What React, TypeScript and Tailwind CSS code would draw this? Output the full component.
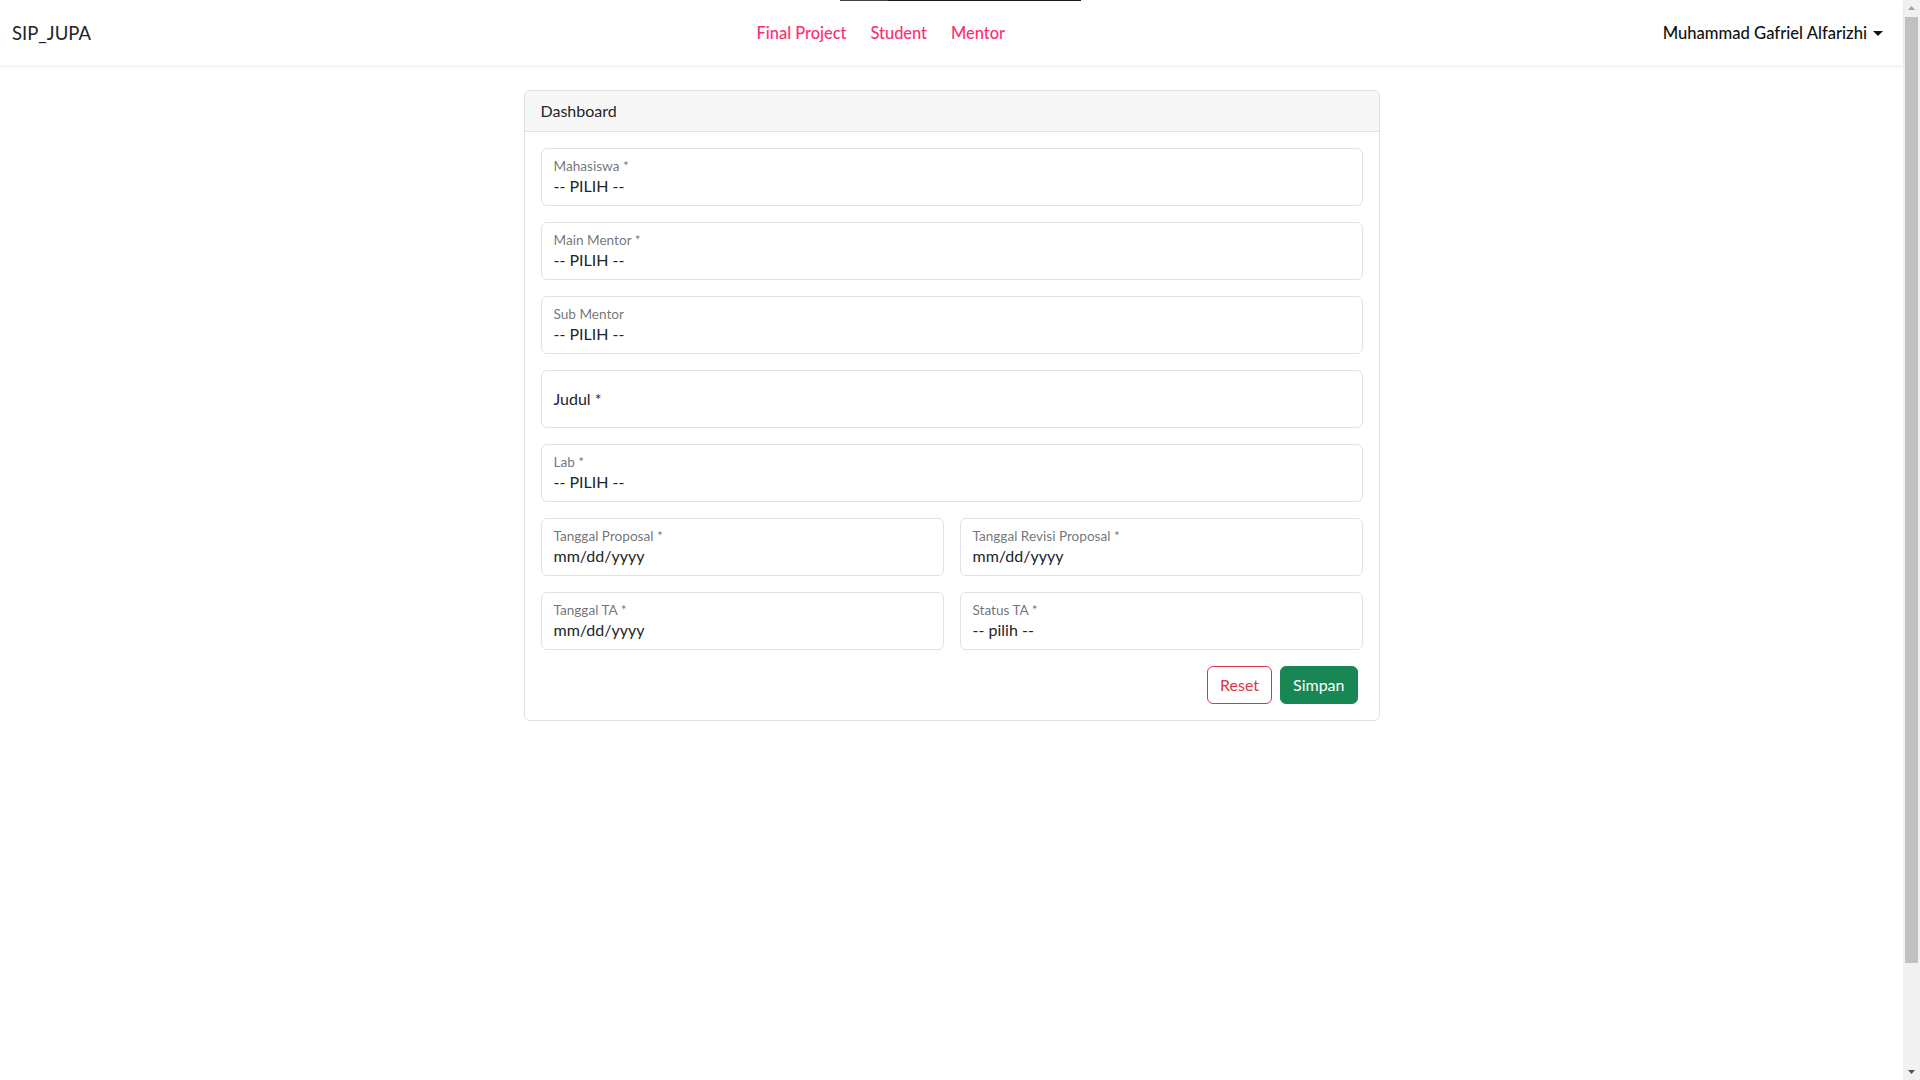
import React from "react"

const font = { fontFamily: "Lato, 'Liberation Sans', sans-serif" }

interface FieldProps {
  label: string
  value: string
}

function FloatingField({ label, value }: FieldProps) {
  return (
    <div className="flex h-[58px] flex-col rounded-md border border-[#dee2e6] bg-white px-3 pt-[9px]">
      <span className="text-[13.6px] leading-[16px] text-[#212529a6]">{label}</span>
      <span className="text-base leading-6 text-[#212529]">{value}</span>
    </div>
  )
}

function PlaceholderField({ label }: { label: string }) {
  return (
    <div className="flex h-[58px] items-center rounded-md border border-[#dee2e6] bg-white px-3">
      <span className="text-base text-[#212529]">{label}</span>
    </div>
  )
}

export default function App() {
  return (
    <div className="flex h-screen overflow-hidden bg-white text-[#212529]" style={font}>
      <div className="relative min-w-0 flex-1">
        {/* loading bar at the top */}
        <div className="absolute left-[840px] top-0 z-10 flex h-px w-[241px]">
          <div className="w-[48px] bg-[#444]" />
          <div className="flex-1 bg-[#1a1a1a]" />
        </div>

        <nav className="flex h-[65px] items-center bg-white px-3 pt-[2px] shadow-[0_2px_4px_rgba(0,0,0,0.06)]">
          <span className="mr-4 text-[18.5px] text-[#212529]">SIP_JUPA</span>
          <ul className="mx-auto flex items-center gap-6 text-[16.4px] font-medium text-[#ff2e72]">
            <li>Final Project</li>
            <li>Student</li>
            <li>Mentor</li>
          </ul>
          <div className="flex items-center px-2 text-[16.6px] font-medium text-[#111]">
            Muhammad Gafriel Alfarizhi
            <span className="ml-[6px] h-0 w-0 border-x-[5px] border-t-[5px] border-x-transparent border-t-[#111]" />
          </div>
        </nav>

        <div className="mx-auto mt-[25px] w-[856px]">
          <div className="rounded-md border border-[#dee2e6]">
            <div className="rounded-t-md border-b border-[#dee2e6] bg-[#f7f7f7] px-4 py-2 leading-6">
              Dashboard
            </div>
            <div className="flex flex-col gap-4 p-4">
              <FloatingField label="Mahasiswa *" value="-- PILIH --" />
              <FloatingField label="Main Mentor *" value="-- PILIH --" />
              <FloatingField label="Sub Mentor" value="-- PILIH --" />
              <PlaceholderField label="Judul *" />
              <FloatingField label="Lab *" value="-- PILIH --" />
              <div className="grid grid-cols-2 gap-4">
                <FloatingField label="Tanggal Proposal *" value="mm/dd/yyyy" />
                <FloatingField label="Tanggal Revisi Proposal *" value="mm/dd/yyyy" />
              </div>
              <div className="grid grid-cols-2 gap-4">
                <FloatingField label="Tanggal TA *" value="mm/dd/yyyy" />
                <FloatingField label="Status TA *" value="-- pilih --" />
              </div>
              <div className="flex justify-end gap-2 pr-[5px]">
                <button className="h-[38px] rounded-md border border-[#dc3545] px-3 text-base text-[#dc3545]">
                  Reset
                </button>
                <button className="h-[38px] rounded-md border border-[#198754] bg-[#198754] px-3 text-base text-white">
                  Simpan
                </button>
              </div>
            </div>
          </div>
        </div>
      </div>

      {/* window scrollbar */}
      <div className="flex w-[17px] shrink-0 flex-col items-center bg-[#f1f1f1]">
        <svg width="17" height="17" viewBox="0 0 17 17" className="shrink-0">
          <path d="M5 10 L8.5 6 L12 10 Z" fill="#a3a3a3" />
        </svg>
        <div className="h-[946px] w-[13px] shrink-0 bg-[#c1c1c1]" />
        <div className="flex-1" />
        <svg width="17" height="17" viewBox="0 0 17 17" className="shrink-0">
          <path d="M5 7 L8.5 11 L12 7 Z" fill="#505050" />
        </svg>
      </div>
    </div>
  )
}
